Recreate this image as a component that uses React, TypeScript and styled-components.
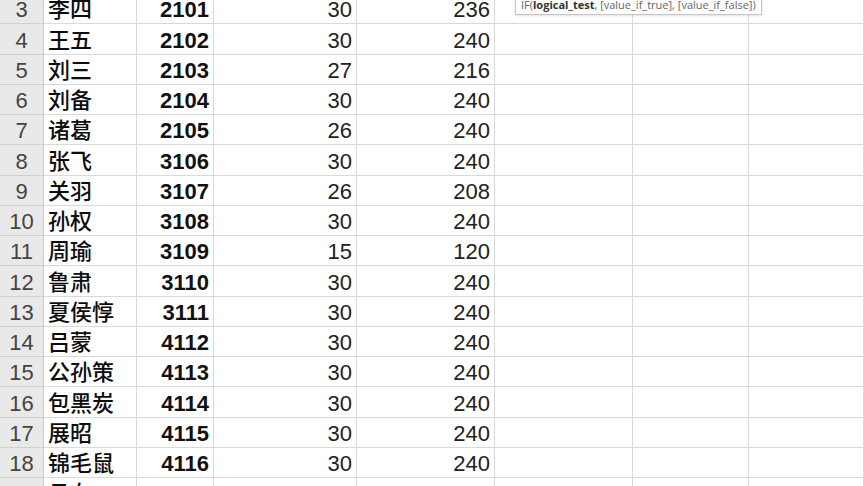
import React from "react";
import styled, { createGlobalStyle } from "styled-components";

const Global = createGlobalStyle`
  html, body { margin: 0; padding: 0; background: #fff; overflow: hidden; }
  body { width: 864px; height: 486px; }
`;

const Viewport = styled.div`
  position: relative;
  width: 864px;
  height: 486px;
  overflow: hidden;
  background: #fff;
`;

const Sheet = styled.div`
  display: grid;
  grid-template-columns: 44px 93px 77px 143px 138px 138px 116px 115px;
  grid-auto-rows: 30.25px;
  margin-top: -6px;
  font-family: "Liberation Sans", "Noto Sans CJK SC", sans-serif;
  font-size: 22px;
  line-height: 22px;
`;

const Cell = styled.div<{ $align?: "left" | "right" | "center"; $bold?: boolean; $color?: string }>`
  box-sizing: border-box;
  display: flex;
  align-items: flex-end;
  justify-content: ${(p) =>
    p.$align === "right" ? "flex-end" : p.$align === "center" ? "center" : "flex-start"};
  padding: 0 4px 2px 4px;
  border-right: 1px solid #d9d9d9;
  border-bottom: 1px solid #d9d9d9;
  font-weight: ${(p) => (p.$bold ? 700 : 400)};
  color: ${(p) => p.$color || "#1a1a1a"};
  white-space: nowrap;
  overflow: hidden;
`;

const NameCell = styled(Cell)`
  font-family: "Liberation Sans", "Noto Sans CJK SC", sans-serif;
  font-weight: 500;
  color: #0d0d0d;
`;

const RowHead = styled(Cell)`
  background: #e9e9e9;
  border-right: 1px solid #c9c9c9;
  border-bottom: 1px solid #cfcfcf;
  color: #444;
  justify-content: center;
  padding: 0 0 2px 0;
`;

const Tip = styled.div`
  position: absolute;
  left: 515px;
  top: -8px;
  height: 23px;
  padding: 0 5px 4px 5px;
  box-sizing: border-box;
  display: flex;
  align-items: flex-end;
  background: #fff;
  border: 1px solid #c6c6c6;
  box-shadow: 0 1px 2px rgba(0, 0, 0, 0.12);
  font-family: "Open Sans", "Noto Sans", sans-serif;
  font-size: 11px;
  line-height: 11px;
  color: #666;
  white-space: nowrap;
`;

const TipBold = styled.b`
  color: #333;
  font-weight: 700;
`;

const rows: [number, string, string, string, string][] = [
  [3, "李四", "2101", "30", "236"],
  [4, "王五", "2102", "30", "240"],
  [5, "刘三", "2103", "27", "216"],
  [6, "刘备", "2104", "30", "240"],
  [7, "诸葛", "2105", "26", "240"],
  [8, "张飞", "3106", "30", "240"],
  [9, "关羽", "3107", "26", "208"],
  [10, "孙权", "3108", "30", "240"],
  [11, "周瑜", "3109", "15", "120"],
  [12, "鲁肃", "3110", "30", "240"],
  [13, "夏侯惇", "3111", "30", "240"],
  [14, "吕蒙", "4112", "30", "240"],
  [15, "公孙策", "4113", "30", "240"],
  [16, "包黑炭", "4114", "30", "240"],
  [17, "展昭", "4115", "30", "240"],
  [18, "锦毛鼠", "4116", "30", "240"],
  [19, "吕布", "4117", "30", "240"],
];

export default function App() {
  return (
    <Viewport>
      <Global />
      <Sheet>
        {rows.map(([n, name, id, a, b]) => (
          <React.Fragment key={n}>
            <RowHead>{n}</RowHead>
            <NameCell>{name}</NameCell>
            <Cell $align="right" $bold $color="#111">{id}</Cell>
            <Cell $align="right" $color="#222">{a}</Cell>
            <Cell $align="right" $color="#222">{b}</Cell>
            <Cell />
            <Cell />
            <Cell />
          </React.Fragment>
        ))}
      </Sheet>
      <Tip>
        IF(<TipBold>logical_test</TipBold>, [value_if_true], [value_if_false])
      </Tip>
    </Viewport>
  );
}
